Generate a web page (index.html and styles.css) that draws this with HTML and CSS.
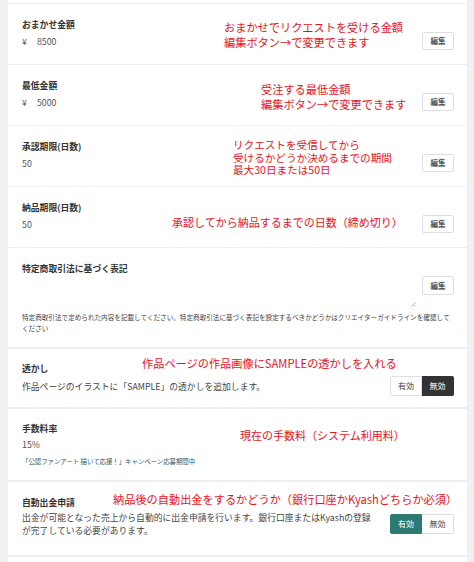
FILE: index.html
```html
<!DOCTYPE html>
<html lang="ja">
<head>
<meta charset="utf-8">
<title>設定</title>
<link rel="stylesheet" href="styles.css">
</head>
<body>
<div class="page">
  <div class="card">
    <div class="cap"></div>

    <section class="sec">
      <div class="title">おまかせ金額</div>
      <div class="row">
        <div class="value"><span class="yen">¥</span>8500</div>
        <button class="btn">編集</button>
      </div>
      <div class="anno a1">おまかせでリクエストを受ける金額<br>編集ボタン→で変更できます</div>
    </section>

    <section class="sec">
      <div class="title">最低金額</div>
      <div class="row">
        <div class="value"><span class="yen">¥</span>5000</div>
        <button class="btn">編集</button>
      </div>
      <div class="anno a2">受注する最低金額<br>編集ボタン→で変更できます</div>
    </section>

    <section class="sec">
      <div class="title">承認期限(日数)</div>
      <div class="row">
        <div class="value">50</div>
        <button class="btn">編集</button>
      </div>
      <div class="anno a3">リクエストを受信してから<br>受けるかどうか決めるまでの期間<br>最大30日または50日</div>
    </section>

    <section class="sec">
      <div class="title">納品期限(日数)</div>
      <div class="row">
        <div class="value">50</div>
        <button class="btn">編集</button>
      </div>
      <div class="anno a4">承認してから納品するまでの日数（締め切り）</div>
    </section>

    <section class="sec sec-law">
      <div class="title">特定商取引法に基づく表記</div>
      <div class="row row-end">
        <button class="btn">編集</button>
      </div>
      <div class="handle-row">
        <svg class="handle" width="6" height="6" viewBox="0 0 6 6"><path d="M5.5 1.5 L1.5 5.5 M5.5 4 L4 5.5" stroke="#999" stroke-width="0.8" fill="none"/></svg>
      </div>
      <p class="small">特定商取引法で定められた内容を記載してください。特定商取引法に基づく表記を設定するべきかどうかはクリエイターガイドラインを確認してください</p>
    </section>

    <section class="sec sec-thick sec-wm">
      <div class="title">透かし</div>
      <div class="row row-toggle">
        <div class="desc">作品ページのイラストに「SAMPLE」の透かしを追加します。</div>
        <div class="toggle">
          <button class="tg">有効</button>
          <button class="tg tg-dark">無効</button>
        </div>
      </div>
      <div class="anno a6">作品ページの作品画像にSAMPLEの透かしを入れる</div>
    </section>

    <section class="sec sec-thick sec-fee">
      <div class="title">手数料率</div>
      <div class="fee">15%</div>
      <div class="campaign">「公認ファンアート 描いて応援！」キャンペーン応募期間中</div>
      <div class="anno a7">現在の手数料（システム利用料）</div>
    </section>

    <section class="sec sec-thick sec-auto">
      <div class="title">自動出金申請</div>
      <div class="row row-toggle row-auto">
        <div class="desc desc-auto">出金が可能となった売上から自動的に出金申請を行います。銀行口座またはKyashの登録が完了している必要があります。</div>
        <div class="toggle">
          <button class="tg tg-teal">有効</button>
          <button class="tg">無効</button>
        </div>
      </div>
      <div class="anno a8">納品後の自動出金をするかどうか（銀行口座かKyashどちらか必須）</div>
    </section>

    <div class="rest"></div>
  </div>
</div>
</body>
</html>
```

FILE: styles.css
```css
html, body {
  margin: 0;
  padding: 0;
}

body {
  background: #eef0f4;
  font-family: "Noto Sans CJK JP", "Noto Sans", sans-serif;
  color: #333;
  font-size: 8.8px;
}

.page {
  height: 562px;
  overflow: hidden;
  padding: 0 7px 0 8px;
}

.card {
  background: #fff;
}

.cap {
  height: 3px;
  border-bottom: 1px solid #eceef1;
}

.sec {
  position: relative;
  padding: 13px 13px 14px 14px;
  border-bottom: 1px solid #eceef1;
}

.sec-thick {
  border-bottom: 2px solid #eceef2;
}

.title {
  font-weight: 700;
  font-size: 8.8px;
  line-height: 15px;
  color: #333;
}

.row {
  display: flex;
  align-items: center;
  justify-content: space-between;
  height: 18px;
}

.value {
  color: #555;
  font-size: 8.8px;
}

.yen {
  margin-right: 10px;
}

.btn {
  width: 32px;
  height: 18px;
  padding: 0;
  border: 1px solid #dcdfe3;
  border-radius: 2px;
  background: #fff;
  color: #555;
  font-family: inherit;
  font-size: 7.5px;
  font-weight: 700;
  line-height: 16px;
}

/* 特定商取引法 */
.sec-law {
  padding-bottom: 13px;
  border-bottom: 2px solid #eceef2;
}

.row-end {
  justify-content: flex-end;
  height: 19px;
}

.row-end .btn {
  height: 19px;
}

.handle-row {
  height: 17px;
  display: flex;
  justify-content: flex-end;
  align-items: center;
  padding-right: 38px;
}

.handle {
  display: block;
}

.small {
  margin: 0;
  font-size: 6.6px;
  line-height: 11px;
  color: #444;
}

/* toggles */
.sec-wm {
  padding: 12px 13px 11px 14px;
}

.row-toggle {
  height: 20px;
}

.desc {
  color: #444;
  font-size: 8.8px;
  line-height: 13px;
}

.toggle {
  display: flex;
  flex-shrink: 0;
}

.tg {
  width: 32px;
  height: 20px;
  padding: 0;
  border: 1px solid #dcdfe3;
  background: #fff;
  color: #444;
  font-family: inherit;
  font-size: 8px;
  line-height: 18px;
}

.tg:first-child {
  border-radius: 2px 0 0 2px;
}

.tg:last-child {
  border-radius: 0 2px 2px 0;
  border-left: none;
}

.tg-dark {
  background: #333;
  border-color: #333;
  color: #fff;
}

.tg-teal {
  background: #2b7b72;
  border-color: #2b7b72;
  color: #fff;
}

/* fee */
.sec-fee {
  padding: 12px 13px 12px 14px;
}

.fee {
  color: #555;
  font-size: 8.8px;
  line-height: 18px;
}

.campaign {
  margin-top: 2px;
  font-size: 6.4px;
  line-height: 12px;
  color: #2f5568;
}

/* auto withdrawal */
.sec-auto {
  padding: 13px 13px 18px 14px;
}

.row-auto {
  height: auto;
  margin-top: 1px;
}

.desc-auto {
  width: 352px;
}

.rest {
  height: 10px;
}

/* annotations overlaid on the screenshot */
.anno {
  position: absolute;
  color: #e8121c;
  font-size: 11.2px;
  white-space: nowrap;
  pointer-events: none;
}

.a1 { left: 216px; top: 16px; line-height: 15px; }
.a2 { left: 253px; top: 17px; line-height: 15px; }
.a3 { left: 225px; top: 13px; line-height: 12.5px; font-size: 10.6px; }
.a4 { left: 164px; top: 28px; line-height: 15px; font-size: 11px; }
.a6 { left: 134px; top: 7px; line-height: 15px; }
.a7 { left: 232px; top: 19px; line-height: 15px; font-size: 11px; }
.a8 { left: 105px; top: 10px; line-height: 15px; }
```
